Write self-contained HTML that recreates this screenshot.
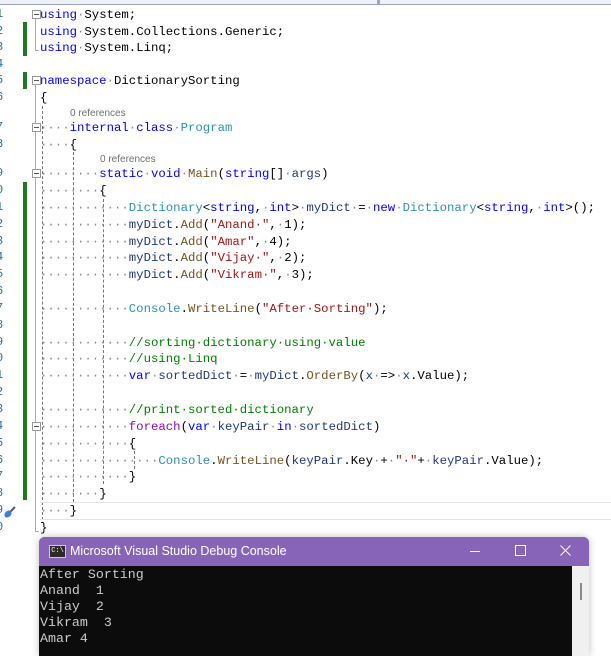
<!DOCTYPE html>
<html><head><meta charset="utf-8"><style>
body{margin:0;width:611px;height:656px;overflow:hidden;background:#fff;position:relative;font-family:"Liberation Mono",monospace;}
.topbar{position:absolute;left:0;top:0;width:611px;height:4px;background:#eef0f8;border-bottom:1px solid #9aa3bd;}
.l{position:absolute;left:40px;font-size:12.33px;white-space:pre;height:17px;line-height:17px;color:#000;}
.d{color:#8a8a8a}
.k{color:#0000ff}.t{color:#2b91af}.s{color:#a31515}.c{color:#008000}.m{color:#74531f}.v{color:#1f377f}
.ref{position:absolute;font-family:"Liberation Sans",sans-serif;font-size:10px;color:#6e6e6e;}
.g{position:absolute;left:23px;width:4px;background:#1b7a1b;}
.box{position:absolute;left:32px;width:7px;height:7px;border:1px solid #999;background:#fff;}
.box:after{content:"";position:absolute;left:1px;top:3px;width:5px;height:1px;background:#555;}
.vd{position:absolute;width:0;border-left:1px dashed #777;}
.num{position:absolute;left:-4px;font-size:12px;color:#2b6fa8;font-family:"Liberation Mono",monospace;}
.con{position:absolute;left:39px;top:537px;width:550px;height:119px;background:#0c0c0c;border-radius:6px 6px 0 0;overflow:hidden;box-shadow:0 0 8px rgba(0,0,0,.25);}
.tb{position:absolute;left:0;top:0;width:550px;height:29px;background:#8764b8;color:#fff;font-family:"Liberation Sans",sans-serif;font-size:12px;}
.ct{position:absolute;left:1px;font-size:13.3px;color:#cccccc;white-space:pre;line-height:16px;}
</style></head><body>
<div class="topbar"></div>
<div style="position:absolute;left:377px;top:0;width:3px;height:5px;background:#9aa3bd"></div>

<div class="num" style="top:7px">1</div><div class="num" style="top:24px">2</div><div class="num" style="top:40px">3</div><div class="num" style="top:57px">4</div><div class="num" style="top:73px">5</div><div class="num" style="top:90px">6</div><div class="num" style="top:120px">7</div><div class="num" style="top:137px">8</div><div class="num" style="top:166px">9</div>
<div class="num" style="top:183px">0</div><div class="num" style="top:200px">1</div><div class="num" style="top:217px">2</div><div class="num" style="top:234px">3</div><div class="num" style="top:250px">4</div><div class="num" style="top:267px">5</div><div class="num" style="top:284px">6</div><div class="num" style="top:301px">7</div><div class="num" style="top:318px">8</div><div class="num" style="top:335px">9</div><div class="num" style="top:351px">0</div><div class="num" style="top:368px">1</div><div class="num" style="top:385px">2</div><div class="num" style="top:402px">3</div><div class="num" style="top:419px">4</div><div class="num" style="top:436px">5</div><div class="num" style="top:453px">6</div><div class="num" style="top:469px">7</div><div class="num" style="top:486px">8</div><div class="num" style="top:503px">9</div><div class="num" style="top:520px">0</div>

<div class="g" style="top:22px;height:34px"></div>
<div class="g" style="top:72px;height:17px"></div>
<div class="g" style="top:182px;height:318px"></div>

<div style="position:absolute;left:35px;top:18px;width:0;height:32px;border-left:1px solid #aaa"></div>
<div style="position:absolute;left:35px;top:50px;width:4px;height:0;border-top:1px solid #aaa"></div>
<div style="position:absolute;left:35px;top:84px;width:0;height:448px;border-left:1px solid #aaa"></div>
<div style="position:absolute;left:35px;top:531px;width:4px;height:0;border-top:1px solid #aaa"></div>
<div class="box" style="top:10px"></div>
<div class="box" style="top:76px"></div>
<div class="box" style="top:123px"></div>
<div class="box" style="top:169px"></div>
<div class="box" style="top:422px"></div>

<div class="vd" style="left:42px;top:106px;height:414px"></div>
<div class="vd" style="left:73px;top:152px;height:350px"></div>
<div class="vd" style="left:103px;top:199px;height:285px"></div>
<div class="vd" style="left:134px;top:451px;height:18px"></div>

<div style="position:absolute;left:40px;top:502px;width:571px;height:16px;border-top:1px solid #e4e4e4;border-bottom:1px solid #e4e4e4"></div>
<div style="position:absolute;left:3px;top:503px;width:16px;height:16px;"><svg width="16" height="16"><path d="M3 13 L12 4" stroke="#556" stroke-width="2"/><ellipse cx="5" cy="11" rx="3" ry="4" transform="rotate(45 5 11)" fill="#3c7fd0"/></svg></div>

<div class="l" style="top:7px"><span class="k">using</span><span class="d">·</span>System;</div>
<div class="l" style="top:24px"><span class="k">using</span><span class="d">·</span>System.Collections.Generic;</div>
<div class="l" style="top:40px"><span class="k">using</span><span class="d">·</span>System.Linq;</div>
<div class="l" style="top:73px"><span class="k">namespace</span><span class="d">·</span>DictionarySorting</div>
<div class="l" style="top:90px">{</div>
<div class="ref" style="left:70px;top:108px">0 references</div>
<div class="l" style="top:120px"><span class="d">····</span><span class="k">internal</span><span class="d">·</span><span class="k">class</span><span class="d">·</span><span class="t">Program</span></div>
<div class="l" style="top:137px"><span class="d">····</span>{</div>
<div class="ref" style="left:100px;top:154px">0 references</div>
<div class="l" style="top:166px"><span class="d">········</span><span class="k">static</span><span class="d">·</span><span class="k">void</span><span class="d">·</span><span class="m">Main</span>(<span class="k">string</span>[]<span class="d">·</span><span class="v">args</span>)</div>
<div class="l" style="top:183px"><span class="d">········</span>{</div>
<div class="l" style="top:200px"><span class="d">············</span><span class="t">Dictionary</span>&lt;<span class="k">string</span>,<span class="d">·</span><span class="k">int</span>&gt;<span class="d">·</span><span class="v">myDict</span><span class="d">·</span>=<span class="d">·</span><span class="k">new</span><span class="d">·</span><span class="t">Dictionary</span>&lt;<span class="k">string</span>,<span class="d">·</span><span class="k">int</span>&gt;();</div>
<div class="l" style="top:217px"><span class="d">············</span><span class="v">myDict</span>.<span class="m">Add</span>(<span class="s">"Anand·"</span>,<span class="d">·</span>1);</div>
<div class="l" style="top:234px"><span class="d">············</span><span class="v">myDict</span>.<span class="m">Add</span>(<span class="s">"Amar"</span>,<span class="d">·</span>4);</div>
<div class="l" style="top:250px"><span class="d">············</span><span class="v">myDict</span>.<span class="m">Add</span>(<span class="s">"Vijay·"</span>,<span class="d">·</span>2);</div>
<div class="l" style="top:267px"><span class="d">············</span><span class="v">myDict</span>.<span class="m">Add</span>(<span class="s">"Vikram·"</span>,<span class="d">·</span>3);</div>
<div class="l" style="top:301px"><span class="d">············</span><span class="t">Console</span>.<span class="m">WriteLine</span>(<span class="s">"After·Sorting"</span>);</div>
<div class="l" style="top:335px"><span class="d">············</span><span class="c">//sorting·dictionary·using·value</span></div>
<div class="l" style="top:351px"><span class="d">············</span><span class="c">//using·Linq</span></div>
<div class="l" style="top:368px"><span class="d">············</span><span class="k">var</span><span class="d">·</span><span class="v">sortedDict</span><span class="d">·</span>=<span class="d">·</span><span class="v">myDict</span>.<span class="m">OrderBy</span>(<span class="v">x</span><span class="d">·</span>=&gt;<span class="d">·</span><span class="v">x</span>.Value);</div>
<div class="l" style="top:402px"><span class="d">············</span><span class="c">//print·sorted·dictionary</span></div>
<div class="l" style="top:419px"><span class="d">············</span><span style="color:#8f08c4">foreach</span>(<span class="k">var</span><span class="d">·</span><span class="v">keyPair</span><span class="d">·</span><span class="k">in</span><span class="d">·</span><span class="v">sortedDict</span>)</div>
<div class="l" style="top:436px"><span class="d">············</span>{</div>
<div class="l" style="top:453px"><span class="d">················</span><span class="t">Console</span>.<span class="m">WriteLine</span>(<span class="v">keyPair</span>.Key<span class="d">·</span>+<span class="d">·</span><span class="s">"·"</span>+<span class="d">·</span><span class="v">keyPair</span>.Value);</div>
<div class="l" style="top:469px"><span class="d">············</span>}</div>
<div class="l" style="top:486px"><span class="d">········</span>}</div>
<div class="l" style="top:503px"><span class="d">····</span>}</div>
<div class="l" style="top:520px">}</div>

<div class="con">
 <div class="tb">
  <div style="position:absolute;left:10px;top:8px;width:15px;height:11px;background:#2a2a2a;border:1px solid #ccc;font-size:7px;line-height:11px;color:#fff;text-align:center;font-family:'Liberation Mono',monospace">C:\</div>
  <div style="position:absolute;left:31px;top:7px;font-size:12.5px">Microsoft Visual Studio Debug Console</div>
  <div style="position:absolute;left:431px;top:14px;width:10px;height:1px;background:#fff"></div>
  <div style="position:absolute;left:476px;top:8px;width:9px;height:9px;border:1px solid #fff"></div>
  <svg style="position:absolute;left:521px;top:8px" width="11" height="11"><path d="M0.5 0.5L10.5 10.5M10.5 0.5L0.5 10.5" stroke="#fff" stroke-width="1"/></svg>
 </div>
 <div style="position:absolute;left:533px;top:29px;width:17px;height:90px;background:#f0f0f0"></div>
 <div style="position:absolute;left:541px;top:46px;width:2px;height:17px;background:#888"></div>
 <div class="ct" style="top:30px">After Sorting
Anand  1
Vijay  2
Vikram  3
Amar 4</div>
</div>
</body></html>
